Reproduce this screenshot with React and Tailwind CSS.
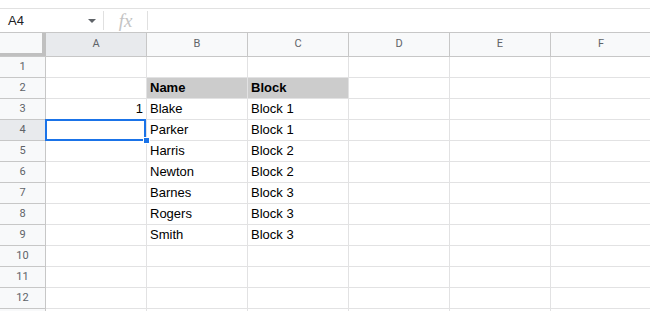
import React from "react";

const cols = ["A", "B", "C", "D", "E", "F"];
const data = {
  2: { B: "Name", C: "Block" },
  3: { A: "1", B: "Blake", C: "Block 1" },
  4: { B: "Parker", C: "Block 1" },
  5: { B: "Harris", C: "Block 2" },
  6: { B: "Newton", C: "Block 2" },
  7: { B: "Barnes", C: "Block 3" },
  8: { B: "Rogers", C: "Block 3" },
  9: { B: "Smith", C: "Block 3" },
};

export default function App() {
  const rows = Array.from({ length: 13 }, (_, i) => i + 1);
  return (
    <div className="w-[650px] h-[311px] overflow-hidden bg-white" style={{ fontFamily: "Arial, 'Liberation Sans', sans-serif" }}>
      <div className="h-[8px] border-b border-[#e1e1e1] box-content" />
      {/* formula bar */}
      <div className="h-[23px] flex items-center border-b border-[#c7c7c7] box-content">
        <div className="w-[103px] flex items-center pl-[8px] pr-[7px] h-full">
          <span className="text-[13px] text-[#202124] flex-1">A4</span>
          <svg width="8" height="4" viewBox="0 0 8 4" className="mt-[1px]">
            <path d="M0 0 L8 0 L4 4 Z" fill="#5f6368" />
          </svg>
        </div>
        <div className="w-px h-[19px] bg-[#e0e0e0]" />
        <div className="w-[43px] flex items-center justify-center h-full">
          <span className="text-[19px] italic text-[#c4c4c4] leading-none" style={{ fontFamily: "'Liberation Serif', serif" }}>fx</span>
        </div>
        <div className="w-px h-[19px] bg-[#e0e0e0]" />
      </div>
      {/* header row */}
      <div className="flex h-[23px] border-b border-[#c7c7c7] box-content bg-[#f8f9fa]">
        <div className="w-[46px] shrink-0 h-full border-r-[4px] border-b-[3px] border-[#c0c0c0] bg-[#f8f9fa]" />
        {cols.map((c) => (
          <div
            key={c}
            className={`w-[101px] shrink-0 h-full border-r border-[#c7c7c7] flex items-center justify-center text-[11px] text-[#5f6368] ${c === "A" ? "bg-[#e8eaed]" : ""}`}
            style={{ fontFamily: "Roboto, Arial, sans-serif" }}
          >
            {c}
          </div>
        ))}
      </div>
      {rows.map((r) => (
        <div key={r} className="flex h-[21px]">
          <div
            className={`w-[46px] shrink-0 h-full border-r border-b border-[#c7c7c7] flex items-center justify-center text-[11px] text-[#5f6368] ${r === 4 ? "bg-[#e8eaed]" : "bg-[#f8f9fa]"}`}
            style={{ fontFamily: "Roboto, Arial, sans-serif" }}
          >
            {r <= 12 ? r : ""}
          </div>
          {cols.map((c) => {
            const v = data[r] && data[r][c];
            const head = r === 2 && (c === "B" || c === "C");
            const sel = r === 4 && c === "A";
            return (
              <div
                key={c}
                className={`relative w-[101px] shrink-0 h-full border-r border-b border-[#e2e2e3] flex items-center text-[13px] text-black ${head ? "bg-[#cccccc] font-bold" : ""} ${c === "A" && v ? "justify-end pr-[3px]" : "pl-[3px]"}`}
              >
                {v}
                {sel && (
                  <>
                    <div className="absolute left-[-1px] top-[-1px] w-[101px] h-[22px] border-2 border-[#1a73e8]" />
                    <div className="absolute right-[-4px] bottom-[-4px] w-[7px] h-[7px] bg-[#1a73e8] border border-white z-10" />
                  </>
                )}
              </div>
            );
          })}
        </div>
      ))}
    </div>
  );
}
